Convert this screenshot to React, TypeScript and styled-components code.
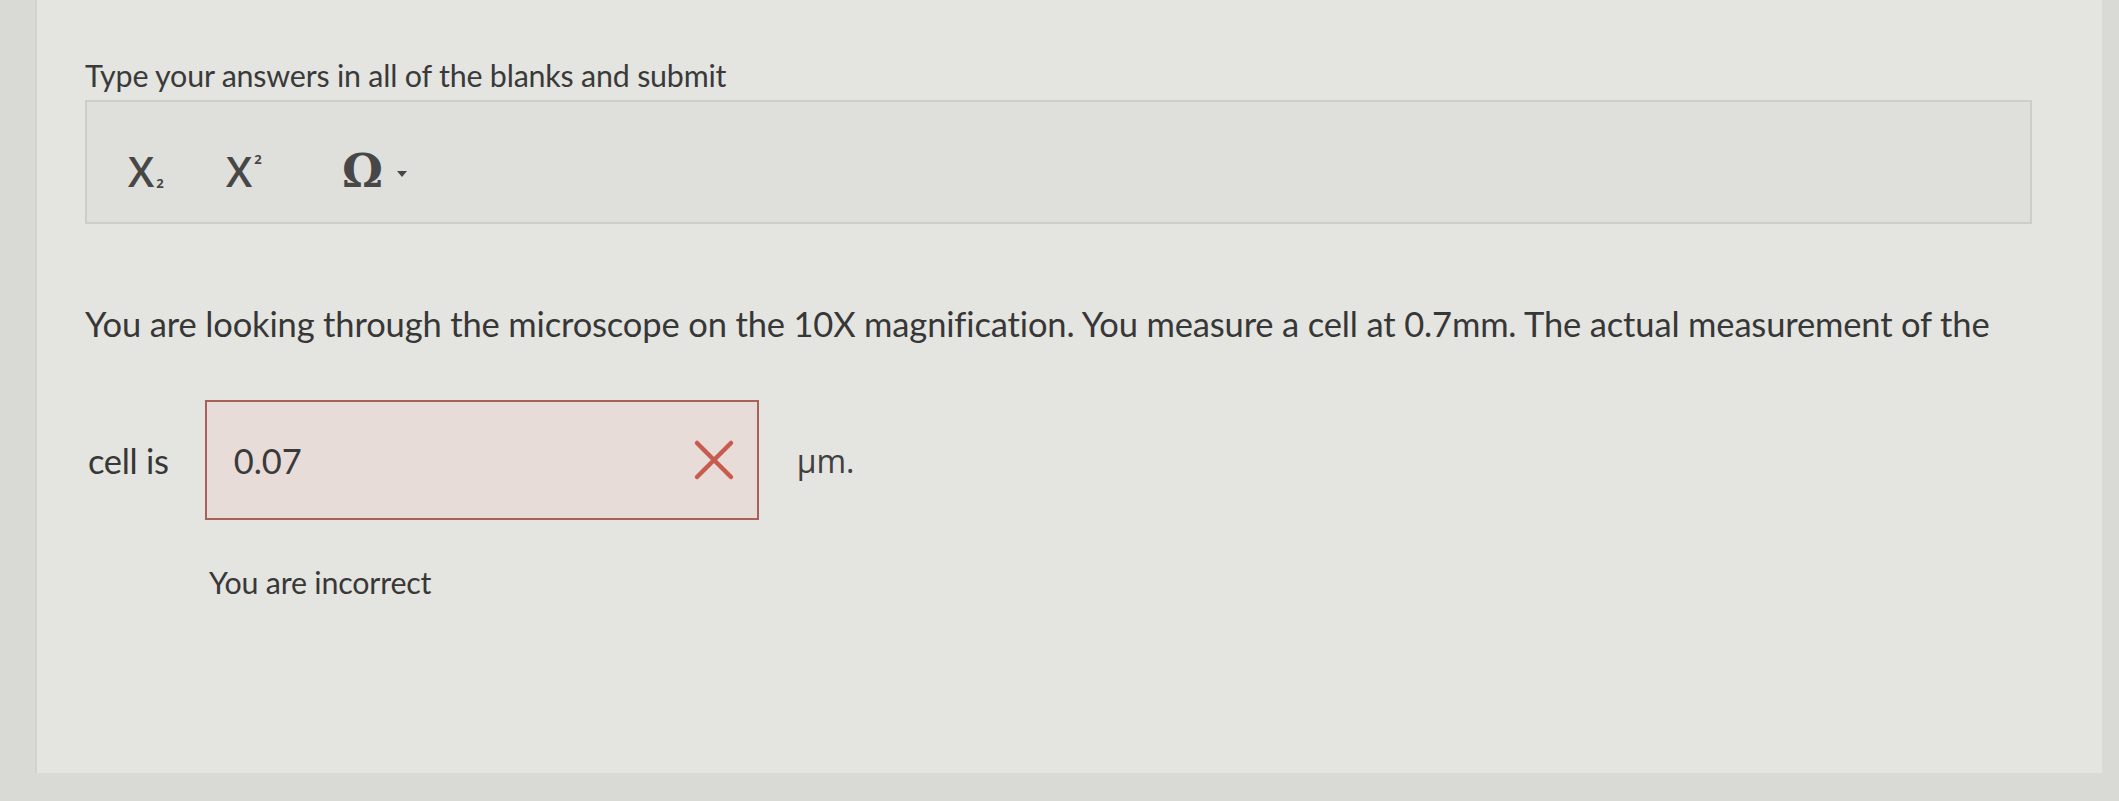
import React from 'react'
import styled, { createGlobalStyle } from 'styled-components'

const GlobalStyle = createGlobalStyle`
  html, body {
    margin: 0;
    padding: 0;
    background: #d9d9d5;
  }
  body {
    font-family: Lato, "Open Sans", sans-serif;
    color: #3c3c3c;
  }
`

const Page = styled.div`
  width: 2119px;
  height: 801px;
  display: flex;
  align-items: flex-start;
  padding-left: 35px;
  box-sizing: border-box;
  overflow: hidden;
`

const Panel = styled.div`
  width: 2067px;
  height: 773px;
  background: #e4e4e0;
  border-left: 2px solid #d2d2ce;
  box-sizing: border-box;
  padding: 57px 0 0 48px;
  display: flex;
  flex-direction: column;
`

const Instruction = styled.div`
  font-size: 30.4px;
  line-height: 36px;
  color: #3a3a3a;
  letter-spacing: -0.2px;
`

const Toolbar = styled.div`
  margin-top: 7px;
  width: 1947px;
  height: 124px;
  box-sizing: border-box;
  border: 2px solid #cdcdc9;
  background: #dfdfdb;
  display: flex;
  align-items: center;
  padding: 18px 0 0 41px;
`

const ToolButton = styled.button<{ $width: number }>`
  width: ${p => p.$width}px;
  height: 60px;
  border: none;
  background: none;
  padding: 0;
  display: flex;
  align-items: center;
  color: #474747;
  font-family: "Open Sans", Lato, sans-serif;
  cursor: pointer;
`

const ScriptX = styled.span`
  font-size: 42px;
  line-height: 1;
  font-weight: 600;
`

const Small = styled.span<{ $up?: boolean }>`
  font-size: 13px;
  font-weight: 700;
  align-self: ${p => (p.$up ? 'flex-start' : 'flex-end')};
  margin: ${p => (p.$up ? '9px 0 0 2px' : '0 0 9px 2px')};
`

const Omega = styled.span`
  font-family: "DejaVu Serif", "Liberation Serif", serif;
  font-size: 46px;
  line-height: 1;
  font-weight: 700;
  color: #474747;
`

const Caret = styled.span`
  width: 0;
  height: 0;
  margin-left: 14px;
  margin-top: 6px;
  border-left: 5px solid transparent;
  border-right: 5px solid transparent;
  border-top: 6px solid #474747;
`

const Question = styled.p`
  margin: 80px 0 0;
  font-size: 34.5px;
  line-height: 40px;
  color: #373737;
  letter-spacing: -0.15px;
`

const AnswerRow = styled.div`
  margin-top: 56px;
  display: flex;
  align-items: center;
  font-size: 34.5px;
  color: #373737;
`

const Label = styled.span`
  margin-left: 3px;
  margin-right: 36px;
  letter-spacing: -0.3px;
`

const AnswerBox = styled.div<{ $wrong: boolean }>`
  width: 554px;
  height: 120px;
  box-sizing: border-box;
  border: 2px solid ${p => (p.$wrong ? '#a9605a' : '#c4c4c0')};
  background: ${p => (p.$wrong ? '#e8dcd9' : '#f2f2ef')};
  display: flex;
  align-items: center;
  justify-content: space-between;
  padding: 0 22px 0 27px;
`

const AnswerValue = styled.span`
  font-size: 34.5px;
  color: #3a3a3a;
`

const Unit = styled.span`
  margin-left: 38px;
  font-family: "Open Sans", Lato, sans-serif;
  font-size: 32px;
  color: #404040;
`

const Feedback = styled.div`
  margin: 44px 0 0 124px;
  font-size: 30.4px;
  line-height: 36px;
  color: #383838;
  letter-spacing: -0.2px;
`

const WrongMark = () => (
  <svg width="42" height="42" viewBox="0 0 42 42">
    <path d="M4 4 L38 38 M38 4 L4 38" stroke="#c95a4e" strokeWidth="4.5" strokeLinecap="round" />
  </svg>
)

const App = () => {
  return (
    <>
      <GlobalStyle />
      <Page>
        <Panel>
          <Instruction>Type your answers in all of the blanks and submit</Instruction>
          <Toolbar>
            <ToolButton $width={98} title="Subscript">
              <ScriptX>X</ScriptX>
              <Small>2</Small>
            </ToolButton>
            <ToolButton $width={116} title="Superscript">
              <ScriptX>X</ScriptX>
              <Small $up>2</Small>
            </ToolButton>
            <ToolButton $width={90} title="Special characters">
              <Omega>Ω</Omega>
              <Caret />
            </ToolButton>
          </Toolbar>
          <Question>
            You are looking through the microscope on the 10X magnification. You measure a cell at 0.7mm. The actual measurement of the
          </Question>
          <AnswerRow>
            <Label>cell is</Label>
            <AnswerBox $wrong>
              <AnswerValue>0.07</AnswerValue>
              <WrongMark />
            </AnswerBox>
            <Unit>µm.</Unit>
          </AnswerRow>
          <Feedback>You are incorrect</Feedback>
        </Panel>
      </Page>
    </>
  )
}

export default App
